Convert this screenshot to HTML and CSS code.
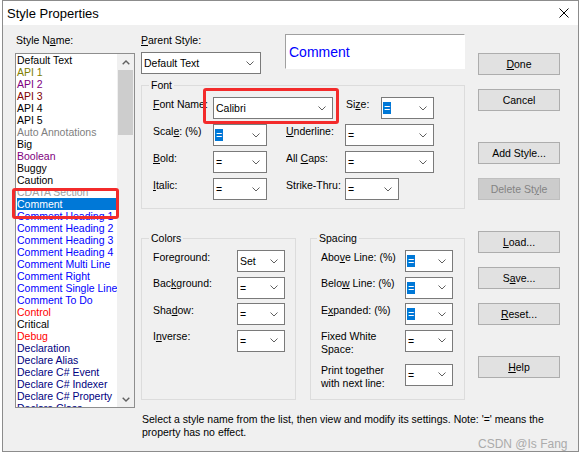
FILE: index.html
```html
<!DOCTYPE html>
<html lang="en">
<head>
    <meta charset="UTF-8">
    <title>Style Properties</title>
    <link rel="stylesheet" href="styles.css">
</head>
<body>
    <div class="window">
        <div class="titlebar">
            <span class="title">Style Properties</span>
            <svg class="close" viewBox="0 0 10 10"><path d="M0.5 0.5 L9.5 9.5 M9.5 0.5 L0.5 9.5"/></svg>
        </div>

        <div class="dialog">
            <div class="names">
                <div class="label">Style N<u>a</u>me:</div>
                <div class="listbox">
                    <ul class="items">
                        <li>Default Text</li>
                        <li class="c-olive">API 1</li>
                        <li class="c-purple">API 2</li>
                        <li class="c-maroon">API 3</li>
                        <li>API 4</li>
                        <li>API 5</li>
                        <li class="c-gray">Auto Annotations</li>
                        <li>Big</li>
                        <li class="c-purple">Boolean</li>
                        <li>Buggy</li>
                        <li>Caution</li>
                        <li class="c-silver">CDATA Section</li>
                        <li class="selected">Comment</li>
                        <li class="c-blue">Comment Heading 1</li>
                        <li class="c-blue">Comment Heading 2</li>
                        <li class="c-blue">Comment Heading 3</li>
                        <li class="c-blue">Comment Heading 4</li>
                        <li class="c-blue">Comment Multi Line</li>
                        <li class="c-blue">Comment Right</li>
                        <li class="c-blue">Comment Single Line</li>
                        <li class="c-blue">Comment To Do</li>
                        <li class="c-red">Control</li>
                        <li>Critical</li>
                        <li class="c-red">Debug</li>
                        <li class="c-navy">Declaration</li>
                        <li class="c-navy">Declare Alias</li>
                        <li class="c-navy">Declare C# Event</li>
                        <li class="c-navy">Declare C# Indexer</li>
                        <li class="c-navy">Declare C# Property</li>
                        <li class="c-navy">Declare Class</li>
                    </ul>
                    <div class="scrollbar">
                        <span class="scroll-btn"><svg viewBox="0 0 8 5"><path d="M0.7 4.3 L4 1 L7.3 4.3"/></svg></span>
                        <span class="thumb"></span>
                        <span class="track"></span>
                        <span class="scroll-btn"><svg viewBox="0 0 8 5"><path d="M0.7 0.7 L4 4 L7.3 0.7"/></svg></span>
                    </div>
                    <div class="mark mark-list"></div>
                </div>
            </div>

            <div class="main">
                <div class="upper">
                    <div class="settings">
                        <div class="top-row">
                            <div class="parent">
                                <div class="label"><u>P</u>arent Style:</div>
                                <div class="combo parent-combo">
                                    <span class="value">Default Text</span>
                                    <svg class="chev" viewBox="0 0 8 5"><path d="M0.5 0.5 L4 4 L7.5 0.5"/></svg>
                                </div>
                            </div>
                            <div class="preview">Comment</div>
                        </div>

                        <fieldset class="group font-group">
                            <legend>Font</legend>
                            <div class="rows">
                                <div class="row">
                                    <div class="label w-60"><u>F</u>ont Name:</div>
                                    <div class="combo-wrap">
                                        <div class="combo w-120">
                                            <span class="value">Calibri</span>
                                            <svg class="chev" viewBox="0 0 8 5"><path d="M0.5 0.5 L4 4 L7.5 0.5"/></svg>
                                        </div>
                                        <div class="mark mark-font"></div>
                                    </div>
                                    <div class="label w-35 gap-13">Si<u>z</u>e:</div>
                                    <div class="combo w-53">
                                        <span class="value sel">=</span>
                                        <svg class="chev" viewBox="0 0 8 5"><path d="M0.5 0.5 L4 4 L7.5 0.5"/></svg>
                                    </div>
                                </div>
                                <div class="row">
                                    <div class="label w-60">Scal<u>e</u>: (%)</div>
                                    <div class="combo w-54">
                                        <span class="value sel">=</span>
                                        <svg class="chev" viewBox="0 0 8 5"><path d="M0.5 0.5 L4 4 L7.5 0.5"/></svg>
                                    </div>
                                    <div class="label w-59 gap-19"><u>U</u>nderline:</div>
                                    <div class="combo w-89">
                                        <span class="value">=</span>
                                        <svg class="chev" viewBox="0 0 8 5"><path d="M0.5 0.5 L4 4 L7.5 0.5"/></svg>
                                    </div>
                                </div>
                                <div class="row">
                                    <div class="label w-60"><u>B</u>old:</div>
                                    <div class="combo w-54">
                                        <span class="value">=</span>
                                        <svg class="chev" viewBox="0 0 8 5"><path d="M0.5 0.5 L4 4 L7.5 0.5"/></svg>
                                    </div>
                                    <div class="label w-59 gap-19">All <u>C</u>aps:</div>
                                    <div class="combo w-89">
                                        <span class="value">=</span>
                                        <svg class="chev" viewBox="0 0 8 5"><path d="M0.5 0.5 L4 4 L7.5 0.5"/></svg>
                                    </div>
                                </div>
                                <div class="row">
                                    <div class="label w-60"><u>I</u>talic:</div>
                                    <div class="combo w-54">
                                        <span class="value">=</span>
                                        <svg class="chev" viewBox="0 0 8 5"><path d="M0.5 0.5 L4 4 L7.5 0.5"/></svg>
                                    </div>
                                    <div class="label w-59 gap-19">Strike-Thru:</div>
                                    <div class="combo w-54">
                                        <span class="value">=</span>
                                        <svg class="chev" viewBox="0 0 8 5"><path d="M0.5 0.5 L4 4 L7.5 0.5"/></svg>
                                    </div>
                                </div>
                            </div>
                        </fieldset>

                        <div class="group-row">
                            <fieldset class="group colors">
                                <legend>Colors</legend>
                                <div class="rows loose">
                                    <div class="row">
                                        <div class="label w-84">Fore<u>g</u>round:</div>
                                        <div class="combo w-48">
                                            <span class="value">Set</span>
                                            <svg class="chev" viewBox="0 0 8 5"><path d="M0.5 0.5 L4 4 L7.5 0.5"/></svg>
                                        </div>
                                    </div>
                                    <div class="row">
                                        <div class="label w-84">Bac<u>k</u>ground:</div>
                                        <div class="combo w-48">
                                            <span class="value">=</span>
                                            <svg class="chev" viewBox="0 0 8 5"><path d="M0.5 0.5 L4 4 L7.5 0.5"/></svg>
                                        </div>
                                    </div>
                                    <div class="row">
                                        <div class="label w-84">Sha<u>d</u>ow:</div>
                                        <div class="combo w-48">
                                            <span class="value">=</span>
                                            <svg class="chev" viewBox="0 0 8 5"><path d="M0.5 0.5 L4 4 L7.5 0.5"/></svg>
                                        </div>
                                    </div>
                                    <div class="row">
                                        <div class="label w-84">I<u>n</u>verse:</div>
                                        <div class="combo w-48">
                                            <span class="value">=</span>
                                            <svg class="chev" viewBox="0 0 8 5"><path d="M0.5 0.5 L4 4 L7.5 0.5"/></svg>
                                        </div>
                                    </div>
                                </div>
                            </fieldset>

                            <fieldset class="group spacing">
                                <legend>Spacing</legend>
                                <div class="rows loose">
                                    <div class="row">
                                        <div class="label w-84">Abo<u>v</u>e Line: (%)</div>
                                        <div class="combo w-48">
                                            <span class="value sel">=</span>
                                            <svg class="chev" viewBox="0 0 8 5"><path d="M0.5 0.5 L4 4 L7.5 0.5"/></svg>
                                        </div>
                                    </div>
                                    <div class="row">
                                        <div class="label w-84">Belo<u>w</u> Line: (%)</div>
                                        <div class="combo w-48">
                                            <span class="value sel">=</span>
                                            <svg class="chev" viewBox="0 0 8 5"><path d="M0.5 0.5 L4 4 L7.5 0.5"/></svg>
                                        </div>
                                    </div>
                                    <div class="row">
                                        <div class="label w-84">E<u>x</u>panded: (%)</div>
                                        <div class="combo w-48">
                                            <span class="value sel">=</span>
                                            <svg class="chev" viewBox="0 0 8 5"><path d="M0.5 0.5 L4 4 L7.5 0.5"/></svg>
                                        </div>
                                    </div>
                                    <div class="row">
                                        <div class="label two-line w-84">Fixed White<br>Space:</div>
                                        <div class="combo w-48">
                                            <span class="value">=</span>
                                            <svg class="chev" viewBox="0 0 8 5"><path d="M0.5 0.5 L4 4 L7.5 0.5"/></svg>
                                        </div>
                                    </div>
                                    <div class="row print-row">
                                        <div class="label two-line w-84">Print together<br>with next line:</div>
                                        <div class="combo w-48">
                                            <span class="value">=</span>
                                            <svg class="chev" viewBox="0 0 8 5"><path d="M0.5 0.5 L4 4 L7.5 0.5"/></svg>
                                        </div>
                                    </div>
                                </div>
                            </fieldset>
                        </div>
                    </div>

                    <div class="buttons">
                        <button class="btn"><u>D</u>one</button>
                        <button class="btn">Cancel</button>
                        <button class="btn sep">Add Style...</button>
                        <button class="btn" disabled>Delete St<u>y</u>le</button>
                        <button class="btn sep"><u>L</u>oad...</button>
                        <button class="btn">S<u>a</u>ve...</button>
                        <button class="btn"><u>R</u>eset...</button>
                        <button class="btn sep"><u>H</u>elp</button>
                    </div>
                </div>

                <p class="note">Select a style name from the list, then view and modify its settings. Note: '=' means the<br>property has no effect.</p>
            </div>
        </div>

        <div class="watermark">CSDN @Is Fang</div>
    </div>
</body>
</html>
```

FILE: styles.css
```css
body {
    margin: 0;
    background-color: #fff;
    font-family: "Liberation Sans", Arial, sans-serif;
    font-size: 10.5px;
    color: #000;
}
.window {
    position: relative;
    box-sizing: border-box;
    width: 577px;
    height: 452px;
    margin-left: 2px;
    border: 1px solid #8c8c8c;
    background-color: #f0f0f0;
}
.titlebar {
    display: flex;
    align-items: center;
    justify-content: space-between;
    height: 24px;
    padding: 0 9px 0 4px;
    background-color: #fff;
}
.title {
    font-size: 13px;
}
.close {
    width: 10px;
    height: 10px;
    fill: none;
    stroke: #000;
    stroke-width: 1;
}
.dialog {
    display: flex;
    padding: 9px 0 0 12px;
}
.label {
    line-height: 13px;
    white-space: nowrap;
}

/* style name list */
.names {
    width: 120px;
}
.names .label {
    margin-bottom: 6px;
    padding-left: 1px;
}
.listbox {
    position: relative;
    display: flex;
    box-sizing: border-box;
    height: 355px;
    border: 1px solid #8e8e8e;
    background-color: #fff;
}
.items {
    flex: 1;
    margin: 0;
    padding: 0;
    list-style: none;
    overflow: hidden;
}
.items li {
    height: 12px;
    line-height: 12px;
    margin-left: 1px;
    white-space: nowrap;
}
.items li.selected {
    background-color: #0078d7;
    color: #fff;
}
.c-olive { color: #808000; }
.c-purple { color: #800080; }
.c-maroon { color: #800000; }
.c-gray { color: #808080; }
.c-silver { color: #a0a0a0; }
.c-blue { color: #0000ff; }
.c-red { color: #ff0000; }
.c-navy { color: #000080; }
.scrollbar {
    display: flex;
    flex-direction: column;
    align-items: center;
    width: 17px;
    background-color: #f0f0f0;
}
.scroll-btn {
    display: flex;
    align-items: center;
    justify-content: center;
    width: 17px;
    height: 16px;
}
.scroll-btn svg {
    width: 8px;
    height: 5px;
    fill: none;
    stroke: #606060;
    stroke-width: 1.4;
}
.thumb {
    width: 15px;
    height: 65px;
    background-color: #cdcdcd;
}
.track {
    flex: 1;
}

/* red annotation boxes */
.mark {
    position: absolute;
    border: 3px solid #f32b2b;
    border-radius: 3px;
    pointer-events: none;
}
.mark-list {
    left: -4px;
    top: 134px;
    width: 101px;
    height: 25px;
}
.combo-wrap {
    position: relative;
}
.mark-font {
    top: -9px;
    left: -10px;
    right: -6px;
    bottom: -5px;
}

/* settings */
.main {
    margin-left: 6px;
}
.upper {
    display: flex;
}
.settings {
    width: 324px;
}
.top-row {
    display: flex;
    align-items: flex-start;
}
.parent .label {
    margin-bottom: 5px;
}
.parent-combo {
    width: 120px;
    height: 21px;
}
.preview {
    display: flex;
    align-items: center;
    box-sizing: border-box;
    width: 180px;
    height: 35px;
    margin-left: 24px;
    padding-left: 3px;
    border: 1px solid;
    border-color: #a0a0a0 #fff #fff #a0a0a0;
    background-color: #fff;
    color: #0000ff;
    font-size: 14px;
}
.combo {
    display: flex;
    align-items: center;
    justify-content: space-between;
    box-sizing: border-box;
    height: 22px;
    padding: 0 6px 0 2px;
    border: 1px solid #7a7a7a;
    background-color: #fff;
    flex: none;
}
.value {
    white-space: nowrap;
}
.value.sel {
    margin-left: -1px;
    padding: 0 1px;
    line-height: 12px;
    background-color: #0078d7;
    color: #fff;
}
.chev {
    width: 8px;
    height: 5px;
    flex: none;
    fill: none;
    stroke: #606060;
    stroke-width: 1;
}
.group {
    box-sizing: border-box;
    min-width: 0;
    margin: 0;
    padding: 5px 10px 8px 11px;
    border: 1px solid #dcdcdc;
}
.group legend {
    margin-left: -4px;
    padding: 0 2px;
    line-height: 13px;
}
.font-group {
    width: 324px;
    margin-top: 5px;
}
.rows {
    display: flex;
    flex-direction: column;
    gap: 5px;
}
.rows.loose {
    gap: 4.5px;
}
.row {
    display: flex;
    align-items: flex-start;
}
.row .label {
    padding-top: 0.5px;
}
.row .label.two-line {
    padding-top: 0;
}
.print-row {
    margin-top: 3.5px;
}
.group-row {
    display: flex;
    gap: 14px;
    margin-top: 23px;
}
.colors,
.spacing {
    width: 155px;
    padding-bottom: 9px;
}
.spacing {
    padding-left: 10px;
}
.w-35 { width: 35px; }
.w-48 { width: 48px; }
.w-53 { width: 53px; }
.w-54 { width: 54px; }
.w-59 { width: 59px; }
.w-60 { width: 60px; }
.w-84 { width: 84px; }
.w-89 { width: 89px; }
.w-120 { width: 120px; }
.gap-13 { margin-left: 13px; }
.gap-19 { margin-left: 19px; }

/* buttons */
.buttons {
    display: flex;
    flex-direction: column;
    width: 82px;
    margin-left: 13px;
    padding-top: 19px;
}
.btn {
    box-sizing: border-box;
    height: 22px;
    margin-top: 14px;
    padding: 0;
    border: 1px solid #adadad;
    background-color: #e1e1e1;
    font: inherit;
    color: #000;
}
.btn:first-child {
    margin-top: 0;
}
.btn.sep {
    margin-top: 31px;
}
.btn:disabled {
    background-color: #cccccc;
    border-color: #bfbfbf;
    color: #838383;
}
.note {
    margin: 13px 0 0;
    padding-left: 1px;
    line-height: 13px;
    white-space: nowrap;
}
.watermark {
    position: absolute;
    left: 475px;
    top: 436px;
    font-size: 12px;
    line-height: 14px;
    color: #ababab;
}
```
